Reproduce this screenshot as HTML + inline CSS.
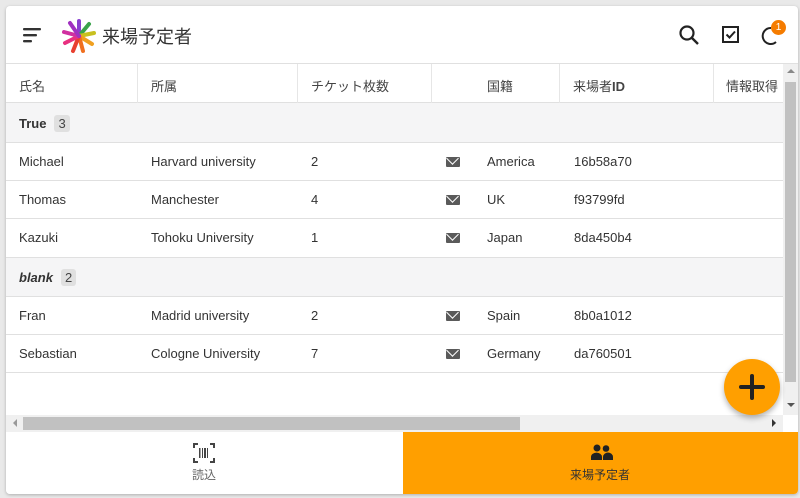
<!DOCTYPE html>
<html><head><meta charset="utf-8"><style>
*{box-sizing:border-box;margin:0;padding:0}
body{width:800px;height:498px;background:#e9e9e9;font-family:"Liberation Sans","Noto Sans CJK JP",sans-serif;position:relative;overflow:hidden;color:#333}
.card{position:absolute;left:6px;top:6px;width:792px;height:488px;background:#fff;border-radius:4px;overflow:hidden;box-shadow:0 1px 3px rgba(0,0,0,.25)}
.top{position:absolute;left:0;top:0;width:792px;height:58px;border-bottom:1px solid #e0e0e0}
.title{position:absolute;left:96px;top:17px;font-size:18px;color:#333}
.hdr{position:absolute;top:58px;left:0;width:777px;height:39px;border-bottom:1px solid #e0e0e0;font-size:13px;color:#444}
.hdr span{position:absolute;top:12px;white-space:nowrap}
.sep{position:absolute;top:0;width:1px;height:39px;background:#e6e6e6}
.row{position:absolute;left:0;width:777px;border-bottom:1px solid #e0e0e0;font-size:13px;color:#333}
.row span{position:absolute;top:11px;white-space:nowrap}
.grp{background:#f5f5f6}
.badge{display:inline-block;background:#e0e0e0;border-radius:3px;padding:1px 4px;margin-left:8px;font-weight:normal;font-size:13px;color:#444}
.mail{position:absolute;top:14px;left:440px;width:14px;height:10px;background:#5a5a5a;border-radius:1px}
.mail:after{content:"";position:absolute;left:2px;top:-3px;width:8px;height:8px;border-right:1.5px solid #fff;border-bottom:1.5px solid #fff;transform:rotate(45deg)}
.vs{position:absolute;left:777px;top:58px;width:15px;height:351px;background:#f0f0f0}
.hs{position:absolute;left:0;top:409px;width:777px;height:17px;background:#f0f0f0}
.nav{position:absolute;left:0;top:426px;width:792px;height:62px}
.fab{position:absolute;left:718px;top:353px;width:56px;height:56px;border-radius:50%;background:#ff9f00;box-shadow:0 3px 6px rgba(0,0,0,.3)}
</style></head><body>
<div class="card">
<div class="top">
 <svg style="position:absolute;left:17px;top:21px" width="20" height="16"><rect x="0" y="1" width="18" height="2.4" rx="1" fill="#333"/><rect x="0" y="7" width="14" height="2.4" rx="1" fill="#333"/><rect x="0" y="13" width="9" height="2.4" rx="1" fill="#333"/></svg>
 <svg style="position:absolute;left:54px;top:11px" width="38" height="38" viewBox="-19 -19 38 38">
  <g stroke-width="4" stroke-linecap="round">
  <line x1="0" y1="0" x2="0" y2="-15" stroke="#8a3fd0"/><line x1="0" y1="0" x2="10" y2="-12" stroke="#3aa34a"/>
  <line x1="0" y1="0" x2="15" y2="-3" stroke="#c8c020"/><line x1="0" y1="0" x2="13" y2="8" stroke="#f0a020"/>
  <line x1="0" y1="0" x2="4" y2="15" stroke="#f07020"/><line x1="0" y1="0" x2="-6" y2="15" stroke="#e84030"/>
  <line x1="0" y1="0" x2="-14" y2="7" stroke="#e83080"/><line x1="0" y1="0" x2="-15" y2="-4" stroke="#d030a0"/>
  <line x1="0" y1="0" x2="-9" y2="-13" stroke="#a030c0"/></g></svg>
 <div class="title">来場予定者</div>
 <svg style="position:absolute;left:672px;top:18px" width="22" height="22"><circle cx="9" cy="9" r="6.5" fill="none" stroke="#222" stroke-width="2.2"/><line x1="14" y1="14" x2="20" y2="20" stroke="#222" stroke-width="2.4"/></svg>
 <svg style="position:absolute;left:715px;top:19px" width="20" height="20"><rect x="2" y="2" width="15" height="15" fill="none" stroke="#222" stroke-width="2"/><path d="M5.5 9.5l3 3 5.5-6" fill="none" stroke="#222" stroke-width="2"/></svg>
 <svg style="position:absolute;left:754px;top:19px" width="22" height="22"><path d="M16 17A8 8 0 1 1 11 3" fill="none" stroke="#222" stroke-width="2"/></svg>
 <div style="position:absolute;left:765px;top:14px;width:15px;height:15px;border-radius:50%;background:#f57c00;color:#fff;font-size:10px;text-align:center;line-height:15px">1</div>
</div>
<div class="hdr">
 <span style="left:13px">氏名</span><div class="sep" style="left:131px"></div>
 <span style="left:145px">所属</span><div class="sep" style="left:291px"></div>
 <span style="left:305px">チケット枚数</span><div class="sep" style="left:425px"></div>
 <span style="left:481px">国籍</span><div class="sep" style="left:553px"></div>
 <span style="left:567px">来場者<b>ID</b></span><div class="sep" style="left:707px"></div>
 <span style="left:720px">情報取得</span>
</div>
<div class="row grp" style="top:97px;height:40px"><span style="left:13px;top:12px;font-weight:bold">True<span class="badge" style="position:static">3</span></span></div>
<div class="row" style="top:137px;height:38px"><span style="left:13px">Michael</span><span style="left:145px">Harvard university</span><span style="left:305px">2</span><div class="mail"></div><span style="left:481px">America</span><span style="left:568px">16b58a70</span></div>
<div class="row" style="top:175px;height:38px"><span style="left:13px">Thomas</span><span style="left:145px">Manchester</span><span style="left:305px">4</span><div class="mail"></div><span style="left:481px">UK</span><span style="left:568px">f93799fd</span></div>
<div class="row" style="top:213px;height:39px"><span style="left:13px">Kazuki</span><span style="left:145px">Tohoku University</span><span style="left:305px">1</span><div class="mail"></div><span style="left:481px">Japan</span><span style="left:568px">8da450b4</span></div>
<div class="row grp" style="top:252px;height:39px"><span style="left:13px;top:11px;font-weight:bold;font-style:italic">blank<span class="badge" style="position:static;font-style:normal">2</span></span></div>
<div class="row" style="top:291px;height:38px"><span style="left:13px">Fran</span><span style="left:145px">Madrid university</span><span style="left:305px">2</span><div class="mail"></div><span style="left:481px">Spain</span><span style="left:568px">8b0a1012</span></div>
<div class="row" style="top:329px;height:38px"><span style="left:13px">Sebastian</span><span style="left:145px">Cologne University</span><span style="left:305px">7</span><div class="mail"></div><span style="left:481px">Germany</span><span style="left:568px">da760501</span></div>
<div class="vs"><div style="position:absolute;left:2px;top:18px;width:11px;height:300px;background:#c1c1c1"></div><div style="position:absolute;left:4px;top:5px;border:4px solid transparent;border-bottom-color:#888;border-top:0"></div><div style="position:absolute;left:4px;top:339px;border:4px solid transparent;border-top-color:#555;border-bottom:0"></div></div>
<div class="hs"><div style="position:absolute;left:17px;top:2px;width:497px;height:13px;background:#c1c1c1"></div><div style="position:absolute;left:7px;top:4px;border:4px solid transparent;border-right-color:#999;border-left:0"></div><div style="position:absolute;left:766px;top:4px;border:4px solid transparent;border-left-color:#333;border-right:0"></div></div>
<div class="nav">
 <div style="position:absolute;left:0;top:0;width:397px;height:62px;background:#fff"></div>
 <svg style="position:absolute;left:187px;top:11px" width="22" height="20"><path d="M1 5V1h4M17 1h4v4M21 15v4h-4M5 19H1v-4" fill="none" stroke="#444" stroke-width="2"/><g fill="#444"><rect x="6" y="5" width="1.5" height="10"/><rect x="9" y="5" width="1" height="10"/><rect x="11" y="5" width="2" height="10"/><rect x="14" y="5" width="1" height="10"/></g></svg>
 <div style="position:absolute;left:186px;top:34px;font-size:12px;color:#666">読込</div>
 <div style="position:absolute;left:397px;top:0;width:395px;height:62px;background:#ff9f00"></div>
 <svg style="position:absolute;left:584px;top:11px" width="24" height="18"><circle cx="7" cy="5" r="3.5" fill="#222"/><circle cx="16" cy="5.5" r="3.3" fill="#222"/><path d="M1 17v-3a5 4 0 0 1 11 0v3zM13 17v-3a4.5 4 0 0 1 10 0v3z" fill="#222"/></svg>
 <div style="position:absolute;left:564px;top:34px;font-size:12px;color:#333">来場予定者</div>
</div>
<div class="fab"><svg width="56" height="56"><path d="M28 17v22M17 28h22" stroke="#222" stroke-width="4" stroke-linecap="round"/></svg></div>
</div>
</body></html>
